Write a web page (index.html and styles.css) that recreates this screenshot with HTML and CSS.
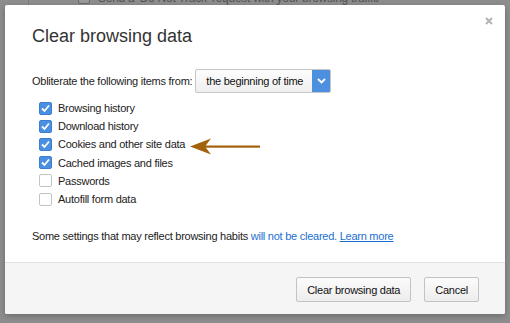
FILE: index.html
```html
<!DOCTYPE html>
<html lang="en">
<head>
    <meta charset="UTF-8">
    <title>Clear browsing data</title>
    <link rel="stylesheet" href="styles.css">
</head>
<body>
    <div class="page">
        <div class="page-row">
            <span class="page-box"></span>
            <span>Send a 'Do Not Track' request with your browsing traffic</span>
        </div>
    </div>

    <div class="dialog">
        <svg class="close" width="8" height="8" viewBox="0 0 8 8">
            <path d="M1 1L7 7M7 1L1 7" stroke="#b4b4b4" stroke-width="2"/>
        </svg>
        <div class="dialog-body">
            <h1>Clear browsing data</h1>

            <div class="range-row">
                <label for="range">Obliterate the following items from:</label>
                <div class="select">
                    <span class="select-text">the beginning of time</span>
                    <span class="select-btn">
                        <svg width="9" height="6" viewBox="0 0 9 6">
                            <path d="M1 1L4.5 4.5L8 1" stroke="#fff" stroke-width="1.8" fill="none"/>
                        </svg>
                    </span>
                </div>
            </div>

            <ul class="items">
                <li><span class="check on"></span>Browsing history</li>
                <li><span class="check on"></span>Download history</li>
                <li><span class="check on"></span>Cookies and other site data</li>
                <li><span class="check on"></span>Cached images and files</li>
                <li><span class="check"></span>Passwords</li>
                <li><span class="check"></span>Autofill form data</li>
            </ul>

            <p class="note">Some settings that may reflect browsing habits <span class="blue">will not be cleared.</span> <a href="#">Learn more</a></p>
        </div>
        <div class="dialog-footer">
            <button>Clear browsing data</button>
            <button class="cancel">Cancel</button>
        </div>

        <svg class="arrow" width="72" height="20" viewBox="0 0 72 20">
            <path d="M0 9.5L21 1.5L15 9.5L21 17.5Z" fill="#a2620c"/>
            <rect x="15" y="8.5" width="55" height="2.2" fill="#a2620c"/>
        </svg>
    </div>
</body>
</html>
```

FILE: styles.css
```css
body {
    margin: 0;
    background-color: #8e8e8e;
    font-family: 'Liberation Sans', Arial, sans-serif;
    font-size: 11px;
    letter-spacing: -0.25px;
    color: #222;
    height: 323px;
    overflow: hidden;
    position: relative;
}

/* страница под диалогом */
.page {
    margin-left: 28px;
    border-left: 1px solid #7c7c7c;
    height: 323px;
}

.page-row {
    display: flex;
    align-items: center;
    gap: 8px;
    margin-top: -9px;
    padding-left: 49px;
    color: #555;
    font-size: 12px;
}

.page-box {
    width: 10px;
    height: 10px;
    border: 1px solid #6c6c6c;
    border-radius: 2px;
    background-color: #9a9a9a;
}

.dialog {
    position: absolute;
    top: 5px;
    left: 5px;
    width: 500px;
    height: 309px;
    background-color: #fff;
    border-radius: 2px;
    box-shadow: 0 2px 6px rgba(0, 0, 0, 0.25);
    display: flex;
    flex-direction: column;
}

.close {
    position: absolute;
    top: 12px;
    right: 12px;
}

.dialog-body {
    padding: 20px 27px 0;
    flex: 1;
}

h1 {
    margin: 0 0 22px;
    font-size: 18px;
    line-height: 22px;
    font-weight: normal;
    letter-spacing: 0;
    color: #333;
}

.range-row {
    display: flex;
    align-items: center;
    gap: 3px;
}

.select {
    display: flex;
    width: 134px;
    height: 22px;
    border: 1px solid #c6c6c6;
    border-radius: 2px;
    background: linear-gradient(#fdfdfd, #efefef);
}

.select-text {
    flex: 1;
    padding-left: 10px;
    line-height: 22px;
    color: #111;
}

.select-btn {
    width: 18px;
    background-color: #4d90e0;
    display: flex;
    align-items: center;
    justify-content: center;
    border-radius: 0 1px 1px 0;
}

.items {
    list-style: none;
    margin: 6px 0 0;
    padding: 0 0 0 7px;
}

.items li {
    display: flex;
    align-items: center;
    height: 18.2px;
    color: #222;
}

.check {
    width: 11px;
    height: 11px;
    margin-right: 6px;
    border: 1px solid #c4c4c4;
    border-radius: 2px;
    background-color: #fff;
    flex-shrink: 0;
}

.check.on {
    border-color: #3b7fd4;
    background-color: #4a8fe0;
    background-image: url("data:image/svg+xml;charset=UTF-8,%3Csvg xmlns='http://www.w3.org/2000/svg' width='11' height='11' viewBox='0 0 11 11'%3E%3Cpath d='M2 5.5L4.5 8L9 2.5' stroke='%23fff' stroke-width='1.8' fill='none'/%3E%3C/svg%3E");
}

.note {
    margin: 20px 0 0;
    line-height: 16px;
    color: #222;
}

.blue {
    color: #1a6fd0;
}

.note a {
    color: #1a6fd0;
}

.dialog-footer {
    height: 51px;
    border-top: 1px solid #e2e2e2;
    background-color: #f5f5f5;
    display: flex;
    justify-content: flex-end;
    align-items: center;
    gap: 13px;
    padding-right: 26px;
    border-radius: 0 0 2px 2px;
}

button {
    height: 25px;
    padding: 0 10px;
    border: 1px solid #c3c3c3;
    border-radius: 2px;
    background: linear-gradient(#fbfbfb, #ededed);
    font-family: 'Liberation Sans', Arial, sans-serif;
    font-size: 11px;
    letter-spacing: -0.25px;
    color: #111;
    margin-top: 2px;
}

button.cancel {
    min-width: 53px;
}

/* стрелка-указатель поверх диалога */
.arrow {
    position: absolute;
    left: 185px;
    top: 132px;
}
```
